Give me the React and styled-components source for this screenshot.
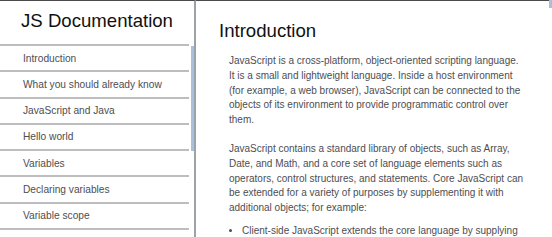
import React from 'react'
import styled, { createGlobalStyle } from 'styled-components'

const GlobalStyle = createGlobalStyle`
  html, body {
    margin: 0;
    padding: 0;
    height: 100%;
    overflow: hidden;
    background: #fff;
  }
  #root {
    height: 100%;
  }
`

const navItems = [
  'Introduction',
  'What you should already know',
  'JavaScript and Java',
  'Hello world',
  'Variables',
  'Declaring variables',
  'Variable scope',
  'Global variables',
  'Constants',
  'Data types',
  'if...else statement',
  'while statement',
  'Function declarations',
  'Reference',
]

const sections = [
  {
    title: 'Introduction',
    paragraphs: [
      'JavaScript is a cross-platform, object-oriented scripting language. It is a small and lightweight language. Inside a host environment (for example, a web browser), JavaScript can be connected to the objects of its environment to provide programmatic control over them.',
      'JavaScript contains a standard library of objects, such as Array, Date, and Math, and a core set of language elements such as operators, control structures, and statements. Core JavaScript can be extended for a variety of purposes by supplementing it with additional objects; for example:',
    ],
    list: [
      'Client-side JavaScript extends the core language by supplying objects to control a browser and its Document Object Model (DOM). For example, client-side extensions allow an application to place elements on an HTML form and respond to user events such as mouse clicks, form input, and page navigation.',
      'Server-side JavaScript extends the core language by supplying objects relevant to running JavaScript on a server. For example, server-side extensions allow an application to communicate with a database, provide continuity of information from one invocation to another of the application, or perform file manipulations on a server.',
    ],
  },
  {
    title: 'What you should already know',
    paragraphs: ['This guide assumes you have the following basic background:'],
    list: [
      'A general understanding of the Internet and the World Wide Web (WWW).',
      'Good working knowledge of HyperText Markup Language (HTML).',
      'Some programming experience. If you are new to programming, try one of the tutorials linked on the main page about JavaScript.',
    ],
  },
  {
    title: 'JavaScript and Java',
    paragraphs: [
      'JavaScript and Java are similar in some ways but fundamentally different in some others. The JavaScript language resembles Java but does not have Java\'s static typing and strong type checking. JavaScript follows most Java expression syntax, naming conventions and basic control-flow constructs which was the reason why it was renamed from LiveScript to JavaScript.',
      'In contrast to Java\'s compile-time system of classes built by declarations, JavaScript supports a runtime system based on a small number of data types representing numeric, Boolean, and string values. JavaScript has a prototype-based object model instead of the more common class-based object model.',
      'JavaScript is a very free-form language compared to Java. You do not have to declare all variables, classes, and methods. Variables, parameters, and function return types are not explicitly typed.',
    ],
  },
  {
    title: 'Hello world',
    paragraphs: [
      'To get started with writing JavaScript, open the Scratchpad and write your first "Hello world" JavaScript code. Select the code in the pad and hit Ctrl+R to watch it unfold in your browser.',
    ],
  },
  {
    title: 'Variables',
    paragraphs: [
      'You use variables as symbolic names for values in your application. The names of variables, called identifiers, conform to certain rules.',
      'A JavaScript identifier must start with a letter, underscore (_), or dollar sign ($); subsequent characters can also be digits (0-9). Because JavaScript is case sensitive, letters include the characters "A" through "Z" (uppercase) and the characters "a" through "z" (lowercase).',
    ],
  },
  {
    title: 'Declaring variables',
    paragraphs: [
      'You can declare a variable in three ways: with the keyword var, by simply assigning it a value, or with the keyword let, which declares a block scope local variable.',
    ],
  },
  {
    title: 'Variable scope',
    paragraphs: [
      'When you declare a variable outside of any function, it is called a global variable, because it is available to any other code in the current document. When you declare a variable within a function, it is called a local variable, because it is available only within that function.',
    ],
  },
  {
    title: 'Global variables',
    paragraphs: [
      'Global variables are in fact properties of the global object. In web pages the global object is window, so you can set and access global variables using the window.variable syntax.',
    ],
  },
  {
    title: 'Constants',
    paragraphs: [
      'You can create a read-only, named constant with the const keyword. A constant cannot change value through assignment or be re-declared while the script is running. It has to be initialized to a value.',
    ],
  },
  {
    title: 'Data types',
    paragraphs: ['The latest ECMAScript standard defines seven data types:'],
    list: [
      'Six data types that are primitives: Boolean, null, undefined, Number, String, Symbol.',
      'and Object',
    ],
  },
  {
    title: 'if...else statement',
    paragraphs: [
      'Use the if statement to execute a statement if a logical condition is true. Use the optional else clause to execute a statement if the condition is false.',
    ],
  },
  {
    title: 'while statement',
    paragraphs: [
      'A while statement executes its statements as long as a specified condition evaluates to true.',
    ],
  },
  {
    title: 'Function declarations',
    paragraphs: [
      'A function definition consists of the function keyword, followed by the name of the function, a list of arguments to the function, and the JavaScript statements that define the function.',
    ],
  },
  {
    title: 'Reference',
    paragraphs: ['All the documentation in this page is taken from MDN'],
  },
]

const App = () => {
  return (
    <>
      <GlobalStyle />
      <Page>
        <Navbar>
          <NavHeader>JS Documentation</NavHeader>
          <NavList>
            {navItems.map((item) => (
              <NavItem key={item}>
                <NavLink href={'#' + item.replace(/ /g, '_')}>{item}</NavLink>
              </NavItem>
            ))}
          </NavList>
          <ScrollThumb $top={45} $height={105} />
        </Navbar>
        <MainPane>
          <Main>
            {sections.map((section) => (
              <Section key={section.title} id={section.title.replace(/ /g, '_')}>
                <SectionTitle>{section.title}</SectionTitle>
                {section.paragraphs.map((text, i) => (
                  <Paragraph
                    key={i}
                    $tight={section.list && i === section.paragraphs.length - 1}
                  >
                    {text}
                  </Paragraph>
                ))}
                {section.list && (
                  <List>
                    {section.list.map((li) => (
                      <ListItem key={li}>{li}</ListItem>
                    ))}
                  </List>
                )}
              </Section>
            ))}
          </Main>
          <ScrollThumb $top={0} $height={8} />
        </MainPane>
      </Page>
    </>
  )
}

export default App

const Page = styled.div`
  display: flex;
  height: 100vh;
  font-family: 'Liberation Sans', Arial, sans-serif;
  color: #4d4e53;
`

const Navbar = styled.nav`
  position: relative;
  width: 196px;
  flex-shrink: 0;
  display: flex;
  flex-direction: column;
  border-top: 1px solid #4a4a4a;
  border-right: 2px solid #9ca3a6;
  box-sizing: border-box;
`

const NavHeader = styled.header`
  height: 43px;
  display: flex;
  align-items: center;
  justify-content: center;
  padding: 0 0 4px;
  box-sizing: border-box;
  font-size: 18.6px;
  color: #111;
`

const NavList = styled.ul`
  flex: 1;
  margin: 0 5px 0 0;
  padding: 0;
  list-style: none;
  overflow-y: auto;
`

const NavItem = styled.li`
  border-top: 2px solid #bdbdbd;
`

const NavLink = styled.a`
  display: block;
  padding: 6.5px 23px 6.3px;
  font-size: 10.2px;
  line-height: 11.5px;
  color: #4d4e53;
  text-decoration: none;
  white-space: nowrap;
`

const ScrollThumb = styled.div`
  position: absolute;
  right: 0;
  top: ${(props) => props.$top}px;
  width: 3px;
  height: ${(props) => props.$height}px;
  background: #a9c0dc;
  pointer-events: none;
`

const MainPane = styled.div`
  position: relative;
  flex: 1;
  min-width: 0;
  display: flex;
`

const Main = styled.main`
  flex: 1;
  min-width: 0;
  overflow-y: auto;
  border-top: 1px solid #4a4a4a;
  padding: 0 27px 0 23px;
`

const Section = styled.section`
  padding-bottom: 10px;
`

const SectionTitle = styled.h2`
  margin: 18.5px 0 13.5px;
  font-size: 18.6px;
  font-weight: 400;
  line-height: 21px;
  color: #111;
`

const Paragraph = styled.p`
  margin: 0 0 ${(props) => (props.$tight ? '8px' : '14px')} 10px;
  font-size: 10px;
  line-height: 14.8px;
`

const List = styled.ul`
  margin: 0 0 14px 10px;
  padding-left: 13px;
`

const ListItem = styled.li`
  font-size: 10px;
  line-height: 14.8px;
`
